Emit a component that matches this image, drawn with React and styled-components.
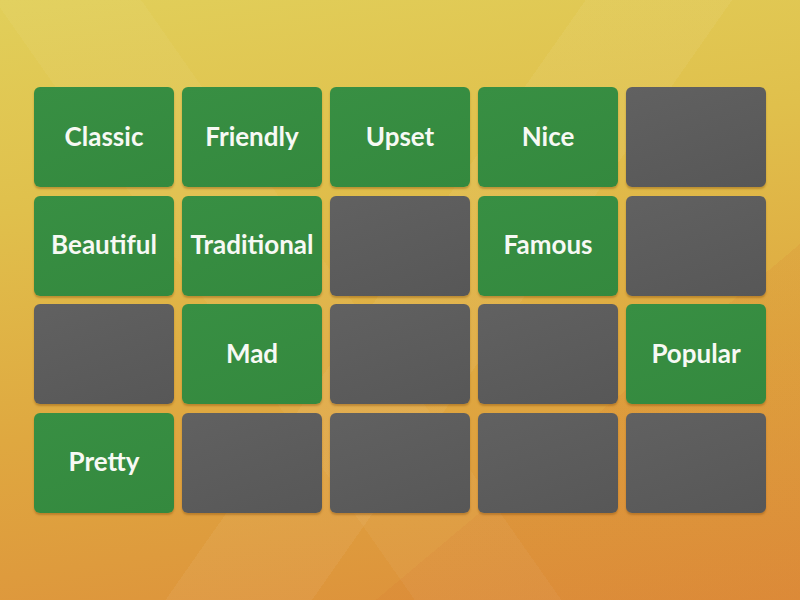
import React from "react";
import styled, { createGlobalStyle } from "styled-components";

const GlobalStyle = createGlobalStyle`
  html, body {
    margin: 0;
    padding: 0;
  }
  body {
    font-family: "Lato", "Noto Sans", sans-serif;
  }
`;

// 배경: 노랑 → 주황 그라디언트 위에 옅은 사선 면
const Page = styled.div`
  width: 800px;
  height: 600px;
  display: flex;
  align-items: center;
  justify-content: center;
  overflow: hidden;
  background:
    linear-gradient(125deg, rgba(255, 255, 255, 0) 0%, rgba(255, 255, 255, 0) 48%, rgba(255, 255, 255, 0.05) 48%, rgba(255, 255, 255, 0.05) 60%, rgba(255, 255, 255, 0) 60%),
    linear-gradient(55deg, rgba(255, 255, 255, 0) 0%, rgba(255, 255, 255, 0) 34%, rgba(255, 255, 255, 0.04) 34%, rgba(255, 255, 255, 0.04) 46%, rgba(255, 255, 255, 0) 46%),
    linear-gradient(140deg, rgba(0, 0, 0, 0) 72%, rgba(210, 100, 40, 0.1) 72%),
    linear-gradient(172deg, #e1cf5a 0%, #e0c04c 30%, #dfa840 62%, #dd8e3a 100%);
`;

const Board = styled.div`
  display: grid;
  grid-template-columns: repeat(5, 140px);
  grid-auto-rows: 100px;
  column-gap: 8px;
  row-gap: 8.67px;
`;

const Card = styled.div`
  display: flex;
  align-items: center;
  justify-content: center;
  padding-bottom: 3px;
  border-radius: 6px;
  background: ${(p) =>
    p.$open
      ? "linear-gradient(160deg, #388f43, #34893e)"
      : "linear-gradient(160deg, #616161, #575757)"};
  box-shadow: 0 2px 2px rgba(120, 70, 10, 0.35);
  color: #f7f9f4;
  font-size: 26px;
  font-weight: 700;
`;

const cards = [
  "Classic", "Friendly", "Upset", "Nice", "",
  "Beautiful", "Traditional", "", "Famous", "",
  "", "Mad", "", "", "Popular",
  "Pretty", "", "", "", "",
];

const App = () => {
  return (
    <>
      <GlobalStyle />
      <Page>
        <Board>
          {cards.map((word, i) => (
            <Card key={i} $open={word !== ""}>
              {word}
            </Card>
          ))}
        </Board>
      </Page>
    </>
  );
};

export default App;
